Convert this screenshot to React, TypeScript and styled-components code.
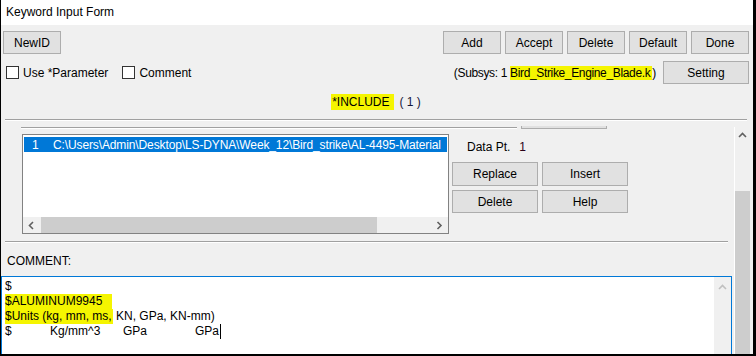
import React from "react";
import styled, { createGlobalStyle } from "styled-components";

const GlobalStyle = createGlobalStyle`
  html, body {
    margin: 0;
    padding: 0;
    background: #ffffff;
  }
  body {
    font-family: "Liberation Sans", Arial, sans-serif;
    font-size: 12px;
    color: #000000;
  }
  * {
    box-sizing: border-box;
  }
`;

const HIGHLIGHT = "#f5f500";

const Window = styled.div`
  width: 756px;
  height: 356px;
  border-left: 1px solid #000;
  border-right: 3px solid #000;
  border-bottom: 2px solid #000;
  background: #f0f0f0;
  display: flex;
  flex-direction: column;
  overflow: hidden;
`;

const TitleBar = styled.div`
  height: 25px;
  flex: none;
  background: #ffffff;
  display: flex;
  align-items: center;
  padding: 0 0 1px 5px;
`;

const Header = styled.div`
  flex: none;
  padding: 6px 4px 0 2px;
  display: flex;
  flex-direction: column;
`;

const Row = styled.div<{ $top?: number; $h?: number }>`
  display: flex;
  align-items: center;
  justify-content: space-between;
  height: ${(p) => p.$h ?? 23}px;
  margin-top: ${(p) => p.$top ?? 0}px;
`;

const Group = styled.div<{ $gap?: number; $pad?: number }>`
  display: flex;
  align-items: center;
  gap: ${(p) => p.$gap ?? 4}px;
  padding-left: ${(p) => p.$pad ?? 0}px;
  height: 100%;
`;

const Button = styled.button<{ $w?: number; $h?: number }>`
  width: ${(p) => p.$w ?? 58}px;
  height: ${(p) => p.$h ?? 23}px;
  padding: 0;
  margin: 0;
  background: #e1e1e1;
  border: 1px solid #adadad;
  border-radius: 0;
  font-family: inherit;
  font-size: 12px;
  color: #000;
  display: flex;
  align-items: center;
  justify-content: center;
`;

const CheckLabel = styled.label`
  display: flex;
  align-items: center;
  gap: 4px;
`;

const CheckBox = styled.span`
  width: 13px;
  height: 13px;
  border: 1px solid #333333;
  background: #ffffff;
  display: inline-block;
`;

const Mark = styled.span<{ $pr?: number }>`
  background: ${HIGHLIGHT};
  padding-right: ${(p) => p.$pr ?? 0}px;
`;

const Subsys = styled.span`
  letter-spacing: -0.35px;
`;

const KeywordRow = styled.div`
  height: 16px;
  margin-top: 10px;
  display: flex;
  align-items: center;
  justify-content: center;
`;

const KeywordMark = styled.span`
  background: ${HIGHLIGHT};
  height: 16px;
  line-height: 16px;
  padding: 0 4px 0 1px;
`;

const Count = styled.span`
  margin-left: 6px;
  color: #16163a;
`;

const Separator = styled.div<{ $top: number; $left: number; $right: number }>`
  flex: none;
  height: 2px;
  margin: ${(p) => p.$top}px ${(p) => p.$right}px 0 ${(p) => p.$left}px;
  border-top: 1px solid #a0a0a0;
  border-bottom: 1px solid #ffffff;
`;

const Main = styled.div`
  flex: 1;
  min-height: 0;
  margin-top: 5px;
  padding-right: 3px;
  display: flex;
`;

const Content = styled.div`
  flex: 1;
  min-width: 0;
  display: flex;
  flex-direction: column;
`;

const CutRow = styled.div`
  height: 3px;
  flex: none;
  display: flex;
  align-items: flex-start;
`;

const CutLine = styled.div`
  width: 496px;
  margin-left: 20px;
  margin-top: 1px;
  height: 2px;
  border-top: 1px solid #a0a0a0;
  border-bottom: 1px solid #ffffff;
`;

const CutButton = styled.div`
  width: 86px;
  height: 3px;
  margin-left: 4px;
  background: #e1e1e1;
  border: 1px solid #adadad;
  border-top: none;
`;

const ListRow = styled.div`
  flex: none;
  margin-top: 5px;
  display: flex;
`;

const ListBox = styled.div`
  width: 427px;
  height: 100px;
  margin-left: 21px;
  border: 1px solid #828282;
  background: #ffffff;
  display: flex;
  flex-direction: column;
`;

const ListItems = styled.div`
  flex: 1;
  overflow: hidden;
  padding: 2px 1px 0 1px;
`;

const ListItem = styled.div<{ $selected?: boolean }>`
  height: 15px;
  display: flex;
  align-items: center;
  white-space: nowrap;
  overflow: hidden;
  letter-spacing: -0.12px;
  background: ${(p) => (p.$selected ? "#0078d7" : "transparent")};
  color: ${(p) => (p.$selected ? "#ffffff" : "#000000")};
`;

const ItemIndex = styled.span`
  width: 29px;
  padding-left: 8px;
  flex: none;
`;

const HScroll = styled.div`
  height: 16px;
  flex: none;
  display: flex;
  background: #f0f0f0;
`;

const ArrowCell = styled.div<{ $w?: number; $h?: number }>`
  width: ${(p) => p.$w ?? 17}px;
  height: ${(p) => p.$h ?? 16}px;
  flex: none;
  display: flex;
  align-items: center;
  justify-content: center;
`;

const Track = styled.div`
  flex: 1;
  display: flex;
  align-items: stretch;
  padding: 0 1px;
`;

const Thumb = styled.div<{ $w: number }>`
  width: ${(p) => p.$w}px;
  background: #cdcdcd;
`;

const SidePanel = styled.div`
  margin-left: 3px;
  display: flex;
  flex-direction: column;
`;

const DataPt = styled.div`
  height: 16px;
  margin-top: 5px;
  padding-left: 15px;
  display: flex;
  align-items: center;
`;

const DataValue = styled.span`
  margin-left: 9px;
  color: #2a0018;
`;

const ButtonGrid = styled.div`
  margin-top: 7px;
  display: grid;
  grid-template-columns: 86px 86px;
  grid-template-rows: 24px 23px;
  gap: 4px;
`;

const CommentLabel = styled.div`
  flex: none;
  height: 33px;
  padding: 11px 0 0 6px;
`;

const CommentBox = styled.div`
  flex: 1;
  margin-right: 2px;
  border: 1px solid #0078d7;
  border-bottom: none;
  background: #ffffff;
  display: flex;
`;

const CommentText = styled.div`
  flex: 1;
  padding: 2px 0 0 3px;
`;

const Line = styled.div`
  height: 15px;
  line-height: 15px;
  white-space: nowrap;
  display: flex;
  align-items: center;
`;

const Col = styled.span<{ $w: number }>`
  display: inline-block;
  width: ${(p) => p.$w}px;
`;

const Caret = styled.span`
  display: inline-block;
  width: 1px;
  height: 15px;
  background: #000;
  margin-left: 1px;
`;

const InnerVScroll = styled.div`
  width: 17px;
  flex: none;
  background: #f0f0f0;
`;

const VScroll = styled.div`
  width: 16px;
  flex: none;
  margin-top: 1px;
  border-left: 1px solid #ffffff;
  background: #f0f0f0;
  display: flex;
  flex-direction: column;
`;

const VTrack = styled.div`
  flex: 1;
  display: flex;
  flex-direction: column;
  padding-top: 47px;
`;

const VThumb = styled.div`
  flex: 1;
  background: #cdcdcd;
`;

const Chevron = ({ dir, color }: { dir: "left" | "right" | "up"; color: string }) => {
  const pts =
    dir === "left"
      ? "5,1 1.5,4.5 5,8"
      : dir === "right"
      ? "1.5,1 5,4.5 1.5,8"
      : "1,5 4.5,1.5 8,5";
  const vb = dir === "up" ? "0 0 9 7" : "0 0 7 9";
  const w = dir === "up" ? 9 : 7;
  const h = dir === "up" ? 7 : 9;
  return (
    <svg width={w} height={h} viewBox={vb}>
      <polyline points={pts} fill="none" stroke={color} strokeWidth={1.6} />
    </svg>
  );
};

const App = () => {
  return (
    <>
      <GlobalStyle />
      <Window>
        <TitleBar>Keyword Input Form</TitleBar>
        <Header>
          <Row>
            <Button $w={58}>NewID</Button>
            <Group>
              {["Add", "Accept", "Delete", "Default", "Done"].map((b) => (
                <Button key={b}>{b}</Button>
              ))}
            </Group>
          </Row>
          <Row $top={7}>
            <Group $gap={14} $pad={3}>
              <CheckLabel>
                <CheckBox />
                Use *Parameter
              </CheckLabel>
              <CheckLabel>
                <CheckBox />
                Comment
              </CheckLabel>
            </Group>
            <Group $gap={7}>
              <Subsys>
                (Subsys: 1 <Mark $pr={2}>Bird_Strike_Engine_Blade.k</Mark>)
              </Subsys>
              <Button $w={86}>Setting</Button>
            </Group>
          </Row>
          <KeywordRow>
            <KeywordMark>*INCLUDE</KeywordMark>
            <Count>( 1 )</Count>
          </KeywordRow>
        </Header>
        <Separator $top={9} $left={4} $right={6} />
        <Main>
          <Content>
            <CutRow>
              <CutLine />
              <CutButton />
            </CutRow>
            <ListRow>
              <ListBox>
                <ListItems>
                  <ListItem $selected>
                    <ItemIndex>1</ItemIndex>
                    C:\Users\Admin\Desktop\LS-DYNA\Week_12\Bird_strike\AL-4495-Material
                  </ListItem>
                </ListItems>
                <HScroll>
                  <ArrowCell>
                    <Chevron dir="left" color="#606060" />
                  </ArrowCell>
                  <Track>
                    <Thumb $w={336} />
                  </Track>
                  <ArrowCell>
                    <Chevron dir="right" color="#606060" />
                  </ArrowCell>
                </HScroll>
              </ListBox>
              <SidePanel>
                <DataPt>
                  Data Pt.
                  <DataValue>1</DataValue>
                </DataPt>
                <ButtonGrid>
                  <Button $w={86} $h={24}>Replace</Button>
                  <Button $w={86} $h={24}>Insert</Button>
                  <Button $w={86}>Delete</Button>
                  <Button $w={86}>Help</Button>
                </ButtonGrid>
              </SidePanel>
            </ListRow>
            <Separator $top={7} $left={4} $right={6} />
            <CommentLabel>COMMENT:</CommentLabel>
            <CommentBox>
              <CommentText>
                <Line>$</Line>
                <Line>
                  <Mark $pr={10}>$ALUMINUM9945</Mark>
                </Line>
                <Line>
                  <Mark $pr={1}>$Units (kg, mm, ms,</Mark>&nbsp;KN, GPa, KN-mm)
                </Line>
                <Line>
                  <Col $w={45}>$</Col>
                  <Col $w={73}>Kg/mm^3</Col>
                  <Col $w={72}>GPa</Col>
                  <span>GPa</span>
                  <Caret />
                </Line>
              </CommentText>
              <InnerVScroll>
                <ArrowCell $w={17} $h={20}>
                  <Chevron dir="up" color="#c0c0c0" />
                </ArrowCell>
              </InnerVScroll>
            </CommentBox>
          </Content>
          <VScroll>
            <ArrowCell $w={15} $h={17}>
              <Chevron dir="up" color="#606060" />
            </ArrowCell>
            <VTrack>
              <VThumb />
            </VTrack>
          </VScroll>
        </Main>
      </Window>
    </>
  );
};

export default App;
